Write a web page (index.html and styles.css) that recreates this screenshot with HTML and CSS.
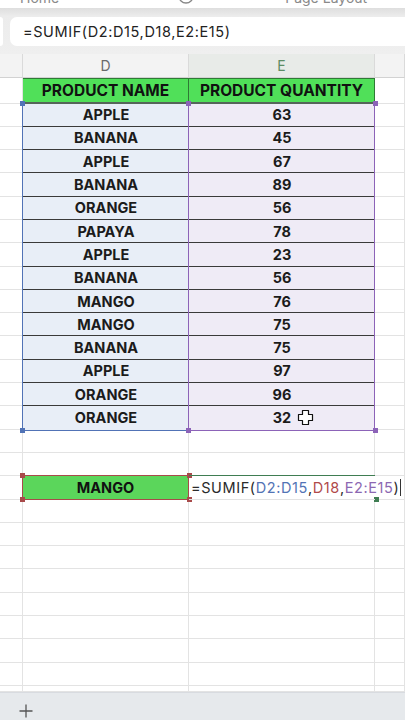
FILE: index.html
```html
<!DOCTYPE html>
<html lang="en">
<head>
    <meta charset="UTF-8">
    <meta name="viewport" content="width=device-width, initial-scale=1.0">
    <title>SUMIF</title>
    <link rel="stylesheet" href="styles.css">
</head>
<body>
    <div class="ribbon">
        <span class="tab">Home</span>
        <span class="tab-icon"><svg width="18" height="18" viewBox="0 0 18 18"><circle cx="9" cy="9" r="7" fill="none" stroke="#888" stroke-width="1.4"/></svg></span>
        <span class="tab">Page Layout</span>
    </div>
    <div class="formula-bar">
        <div class="name-box"></div>
        <div class="formula-input">=SUMIF(D2:D15,D18,E2:E15)</div>
    </div>
    <div class="sheet">
        <!-- column letters -->
        <div class="cell colhead"></div><div class="cell colhead">D</div><div class="cell colhead colhead-active">E</div><div class="cell colhead"></div>
        <!-- row 1 -->
        <div class="cell"></div><div class="cell title">PRODUCT NAME</div><div class="cell title">PRODUCT QUANTITY</div><div class="cell"></div>
        <!-- rows 2-15 -->
        <div class="cell"></div><div class="cell name">APPLE</div><div class="cell qty">63</div><div class="cell"></div>
        <div class="cell"></div><div class="cell name">BANANA</div><div class="cell qty">45</div><div class="cell"></div>
        <div class="cell"></div><div class="cell name">APPLE</div><div class="cell qty">67</div><div class="cell"></div>
        <div class="cell"></div><div class="cell name">BANANA</div><div class="cell qty">89</div><div class="cell"></div>
        <div class="cell"></div><div class="cell name">ORANGE</div><div class="cell qty">56</div><div class="cell"></div>
        <div class="cell"></div><div class="cell name">PAPAYA</div><div class="cell qty">78</div><div class="cell"></div>
        <div class="cell"></div><div class="cell name">APPLE</div><div class="cell qty">23</div><div class="cell"></div>
        <div class="cell"></div><div class="cell name">BANANA</div><div class="cell qty">56</div><div class="cell"></div>
        <div class="cell"></div><div class="cell name">MANGO</div><div class="cell qty">76</div><div class="cell"></div>
        <div class="cell"></div><div class="cell name">MANGO</div><div class="cell qty">75</div><div class="cell"></div>
        <div class="cell"></div><div class="cell name">BANANA</div><div class="cell qty">75</div><div class="cell"></div>
        <div class="cell"></div><div class="cell name">APPLE</div><div class="cell qty">97</div><div class="cell"></div>
        <div class="cell"></div><div class="cell name">ORANGE</div><div class="cell qty">96</div><div class="cell"></div>
        <div class="cell"></div><div class="cell name last">ORANGE</div><div class="cell qty last">32
            <svg class="pointer" width="17" height="17" viewBox="0 0 17 17"><path d="M5.5 1.5h6v4h4v6h-4v4h-6v-4h-4v-6h4z" fill="#fff" stroke="#111" stroke-width="1.2" stroke-linejoin="round"/></svg>
        </div><div class="cell"></div>
        <!-- rows 16-17 -->
        <div class="cell"></div><div class="cell"></div><div class="cell"></div><div class="cell"></div>
        <div class="cell"></div><div class="cell"></div><div class="cell"></div><div class="cell"></div>
        <!-- row 18 -->
        <div class="cell"></div><div class="cell criteria">MANGO</div><div class="cell editing"><span class="edit-text">=SUMIF(<span class="ref-blue">D2:D15</span>,<span class="ref-red">D18</span>,<span class="ref-purple">E2:E15</span>)<span class="caret"></span></span></div><div class="cell"></div>
        <!-- rows 19-27 -->
        <div class="cell"></div><div class="cell"></div><div class="cell"></div><div class="cell"></div>
        <div class="cell"></div><div class="cell"></div><div class="cell"></div><div class="cell"></div>
        <div class="cell"></div><div class="cell"></div><div class="cell"></div><div class="cell"></div>
        <div class="cell"></div><div class="cell"></div><div class="cell"></div><div class="cell"></div>
        <div class="cell"></div><div class="cell"></div><div class="cell"></div><div class="cell"></div>
        <div class="cell"></div><div class="cell"></div><div class="cell"></div><div class="cell"></div>
        <div class="cell"></div><div class="cell"></div><div class="cell"></div><div class="cell"></div>
        <div class="cell"></div><div class="cell"></div><div class="cell"></div><div class="cell"></div>
        <div class="cell"></div><div class="cell"></div><div class="cell"></div><div class="cell"></div>

        <!-- range highlights -->
        <div class="range range-blue"><i class="handle tl"></i><i class="handle bl"></i></div>
        <div class="range range-purple"><i class="handle tl"></i><i class="handle tr"></i><i class="handle bl"></i><i class="handle br"></i></div>
        <div class="range range-red"><i class="handle tl"></i><i class="handle tr"></i><i class="handle bl"></i><i class="handle br"></i></div>
        <div class="range range-green"><i class="handle br"></i></div>
    </div>
    <div class="sheet-tabs">
        <svg class="add-sheet" width="14" height="14" viewBox="0 0 14 14"><path d="M7 0.5v13M0.5 7h13" stroke="#555" stroke-width="1.3"/></svg>
    </div>
</body>
</html>
```
FILE: styles.css
```css
body {
    margin: 0;
    width: 405px;
    height: 720px;
    overflow: hidden;
    background: #fff;
    font-family: Inter, "Open Sans", sans-serif;
    color: #1b1b1b;
}
.ribbon {
    height: 8px;
    overflow: hidden;
    display: flex;
    align-items: flex-start;
    font-size: 14px;
    color: #8a8a8a;
}
.ribbon .tab {
    line-height: 14px;
    margin-top: -9px;
}
.ribbon .tab:first-child {
    margin-left: 20px;
}
.tab-icon {
    margin-left: 118px;
    margin-top: -13px;
}
.ribbon .tab:last-child {
    margin-left: 90px;
}
.formula-bar {
    height: 46px;
    background: linear-gradient(#dedede, #ececec 18%, #efefef);
    display: flex;
    align-items: center;
    gap: 7px;
}
.name-box {
    width: 3px;
    height: 29px;
    background: #fff;
    border-radius: 0 6px 6px 0;
}
.formula-input {
    flex: 1;
    height: 29px;
    background: #fff;
    border-radius: 7px 0 0 7px;
    display: flex;
    align-items: center;
    padding-left: 13px;
    font-size: 14.5px;
    letter-spacing: 0.6px;
    color: #222;
}
.sheet {
    position: relative;
    display: grid;
    grid-template-columns: 23px 166px 186px 1fr;
    grid-template-rows: 24px 25.5px repeat(25, 23.3px) 1fr;
    height: 638px;
    overflow: hidden;
}
.cell {
    box-sizing: border-box;
    min-width: 0;
    border-right: 1px solid #e3e3e3;
    border-bottom: 1px solid #e3e3e3;
    display: flex;
    align-items: center;
    justify-content: center;
    font-size: 14.5px;
    font-weight: 700;
    white-space: nowrap;
}
.colhead {
    background: #f3f3f3;
    border-bottom-color: #d2d2d2;
    border-right-color: #dadada;
    font-weight: 400;
    font-size: 14px;
    color: #6a6a6a;
}
.colhead-active {
    background: #e8ebe8;
    color: #5d8c65;
}
.title {
    background: #50e059;
    border-top: 1px solid #2f7a35;
    border-right: 1px solid #2f7a35;
    border-bottom: 2px solid #55655a;
    font-size: 15.5px;
    color: #111;
}
.name {
    background: #e8eef7;
    border-right: none;
    border-bottom-color: #3a3a3a;
}
.qty {
    background: #efebf6;
    border-right: none;
    border-bottom-color: #3a3a3a;
    position: relative;
}
.cell.last {
    border-bottom-color: transparent;
}
.pointer {
    position: absolute;
    left: 108px;
    top: 3px;
}
.criteria {
    background: #5bd65b;
    color: #111;
}
.editing {
    position: relative;
    z-index: 2;
    justify-content: flex-start;
    overflow: visible;
    border-right: none;
}
.edit-text {
    background: #fff;
    margin-left: 2px;
    font-size: 14.5px;
    letter-spacing: 0.6px;
    font-weight: 400;
    color: #2a2a2a;
    display: flex;
    align-items: center;
}
.ref-blue { color: #5273b5; }
.ref-red { color: #b04a4a; }
.ref-purple { color: #8c68b2; }
.caret {
    display: inline-block;
    width: 1px;
    height: 17px;
    margin-left: 1px;
    background: #333;
}
.range {
    position: absolute;
    box-sizing: border-box;
    pointer-events: none;
}
.range-blue {
    grid-column: 2 / 3;
    grid-row: 3 / 17;
    top: 0;
    bottom: -1px;
    left: -1px;
    right: 0;
    border-left: 1.5px solid #5173b6;
    border-bottom: 1.5px solid #5173b6;
}
.range-purple {
    grid-column: 3 / 4;
    grid-row: 3 / 17;
    top: 0;
    bottom: -1px;
    left: -1px;
    right: 0;
    border: 1.5px solid #8c63b8;
    border-top: none;
}
.range-red {
    grid-column: 2 / 3;
    grid-row: 19 / 20;
    top: -1px;
    bottom: 0;
    left: -1px;
    right: 0;
    border: 1.5px solid #a84a4a;
}
.range-green {
    grid-column: 3 / 4;
    grid-row: 19 / 20;
    top: -1px;
    bottom: 0;
    left: 0;
    right: 0;
    border-top: 1.5px solid #3f7d52;
    border-bottom: 1.5px solid #3f7d52;
    z-index: 1;
}
.handle {
    position: absolute;
    width: 5px;
    height: 5px;
}
.range-blue .handle { background: #5173b6; }
.range-purple .handle { background: #8c63b8; }
.range-red .handle { background: #a84a4a; }
.range-green .handle { background: #3f7d52; }
.handle.tl { left: -3.5px; top: -3px; }
.handle.tr { right: -3.5px; top: -3px; }
.handle.bl { left: -3.5px; bottom: -3.5px; }
.handle.br { right: -3.5px; bottom: -3.5px; }
.sheet-tabs {
    height: 28px;
    box-sizing: border-box;
    background: #e6e9ec;
    border-top: 1px solid #d8dbe0;
    padding: 11px 0 0 19px;
}
.add-sheet {
    display: block;
}
```
